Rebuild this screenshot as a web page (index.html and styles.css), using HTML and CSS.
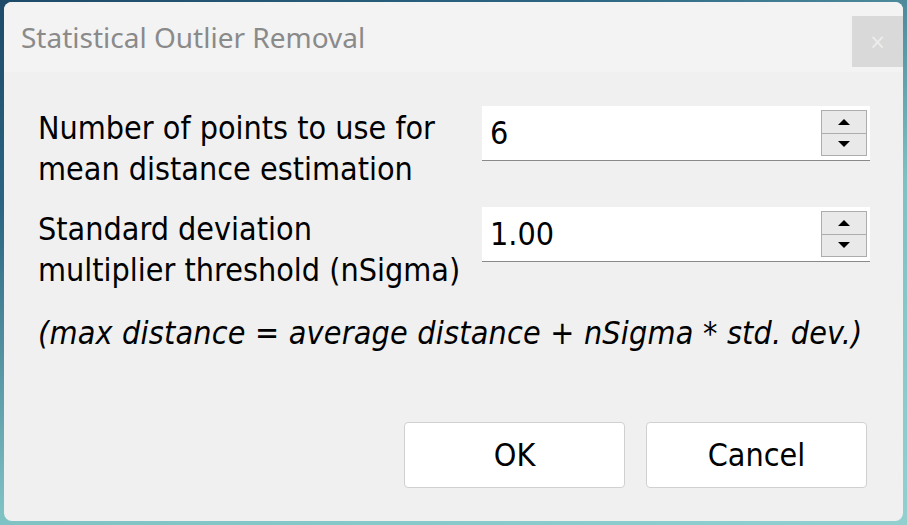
FILE: index.html
```html
<!DOCTYPE html>
<html lang="en">
<head>
    <meta charset="UTF-8">
    <meta name="viewport" content="width=device-width, initial-scale=1.0">
    <title>Statistical Outlier Removal</title>
    <link rel="stylesheet" href="styles.css">
</head>
<body>
    <div class="window">
        <div class="titlebar">
            <div class="title">Statistical Outlier Removal</div>
            <div class="close">&#215;</div>
        </div>
        <div class="content">
            <div class="row">
                <div class="label">Number of points to use for<br>mean distance estimation</div>
                <div class="spinbox">
                    <div class="value">6</div>
                    <div class="spin">
                        <div class="spin-btn"><svg width="12" height="6" viewBox="0 0 12 6"><polygon points="0,6 12,6 6,0"/></svg></div>
                        <div class="spin-btn"><svg width="12" height="6" viewBox="0 0 12 6"><polygon points="0,0 12,0 6,6"/></svg></div>
                    </div>
                </div>
            </div>
            <div class="row">
                <div class="label">Standard deviation<br>multiplier threshold (nSigma)</div>
                <div class="spinbox">
                    <div class="value">1.00</div>
                    <div class="spin">
                        <div class="spin-btn"><svg width="12" height="6" viewBox="0 0 12 6"><polygon points="0,6 12,6 6,0"/></svg></div>
                        <div class="spin-btn"><svg width="12" height="6" viewBox="0 0 12 6"><polygon points="0,0 12,0 6,6"/></svg></div>
                    </div>
                </div>
            </div>
            <div class="note">(max distance = average distance + nSigma * std. dev.)</div>
            <div class="buttons">
                <button class="btn">OK</button>
                <button class="btn">Cancel</button>
            </div>
        </div>
    </div>
</body>
</html>
```

FILE: styles.css
```css
body {
    margin: 0;
    width: 907px;
    height: 525px;
    overflow: hidden;
    background: linear-gradient(160deg, #1d4a68 0%, #2c6682 25%, #7fc2c4 60%, #92d0d0 100%);
    font-family: "DejaVu Sans Condensed", "DejaVu Sans", sans-serif;
    font-stretch: condensed;
}
.window {
    margin: 2px 4px 0 4px;
    width: 899px;
    height: 519px;
    border-radius: 8px;
    background-color: #f0f0f0;
    overflow: hidden;
}
.titlebar {
    height: 70px;
    background-color: #f3f3f3;
    display: flex;
    align-items: flex-start;
}
.title {
    font-family: "Noto Sans", "Open Sans", sans-serif;
    font-stretch: normal;
    font-size: 28px;
    color: #8a8a8a;
    padding: 16px 0 0 17px;
}
.close {
    margin: 14px 0 0 auto;
    width: 51px;
    height: 51px;
    background-color: #d9d9d9;
    color: #ededed;
    font-family: "DejaVu Sans", sans-serif;
    font-size: 22px;
    display: flex;
    justify-content: center;
    align-items: center;
}
.content {
    padding: 34px 33px 0 34px;
}
.row {
    display: flex;
    justify-content: space-between;
    align-items: flex-start;
    margin-bottom: 44px;
}
.row + .row {
    margin-bottom: 0;
}
.label {
    font-size: 32px;
    line-height: 41px;
    color: #000;
    margin-top: 2px;
    height: 55px;
}
.spinbox {
    width: 388px;
    height: 54px;
    background-color: #fff;
    border-bottom: 1px solid #8a8a8a;
    display: flex;
    align-items: center;
    justify-content: space-between;
}
.value {
    font-size: 32px;
    padding-left: 8px;
}
.spin {
    width: 44px;
    height: 44px;
    margin-right: 3px;
    border: 1px solid #adadad;
    display: flex;
    flex-direction: column;
}
.spin-btn {
    flex: 1;
    background-color: #e9e9e9;
    display: flex;
    justify-content: center;
    align-items: center;
}
.spin-btn + .spin-btn {
    border-top: 1px solid #adadad;
}
.note {
    font-size: 32px;
    font-style: italic;
    letter-spacing: 0.2px;
    margin-top: 50px;
}
.buttons {
    display: flex;
    justify-content: flex-end;
    gap: 21px;
    margin-top: 70px;
    padding-right: 3px;
}
.btn {
    width: 221px;
    height: 66px;
    background-color: #fff;
    border: 1px solid #d0d0d0;
    border-radius: 4px;
    font-family: "DejaVu Sans Condensed", "DejaVu Sans", sans-serif;
    font-size: 32px;
    color: #000;
    padding: 0;
}
```
